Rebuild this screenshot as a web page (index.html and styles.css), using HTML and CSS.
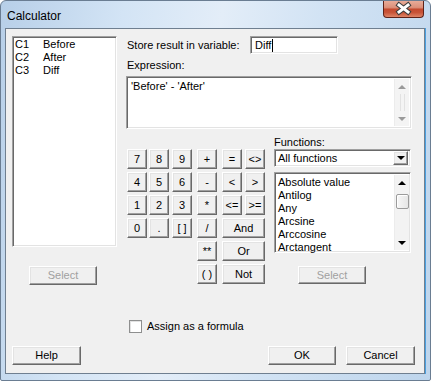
FILE: index.html
```html
<!DOCTYPE html>
<html>
<head>
<meta charset="utf-8">
<link rel="stylesheet" href="styles.css">
</head>
<body>
<div class="window">
  <div class="titlebar">
    <span class="title">Calculator</span>
    <div class="close">
      <svg width="39" height="16" viewBox="0 0 39 16">
        <g stroke-linecap="square">
          <line x1="15" y1="4" x2="24" y2="11" stroke="#3d3d3d" stroke-width="5"/>
          <line x1="24" y1="4" x2="15" y2="11" stroke="#3d3d3d" stroke-width="5"/>
          <line x1="15" y1="4" x2="24" y2="11" stroke="#ffffff" stroke-width="3"/>
          <line x1="24" y1="4" x2="15" y2="11" stroke="#ffffff" stroke-width="3"/>
        </g>
      </svg>
    </div>
  </div>
  <div class="client">
    <div class="top">
      <div class="leftcol">
        <div class="sunken varlist">
          <div class="item"><span class="cn">C1</span>Before</div>
          <div class="item"><span class="cn">C2</span>After</div>
          <div class="item"><span class="cn">C3</span>Diff</div>
        </div>
        <div class="btn disabled sel-left">Select</div>
      </div>
      <div class="rightcol">
        <div class="storerow">
          <span class="store-label">Store result in variable:</span>
          <div class="sunken input">Diff<span class="caret"></span></div>
        </div>
        <div class="label expr-label">Expression:</div>
        <div class="sunken expr">
          <div class="expr-text">'Before' - 'After'</div>
          <div class="vscroll off">
            <div class="sarrow"><span class="tri-up grey"></span></div>
            <div class="strack"><span class="tline"></span></div>
            <div class="sarrow"><span class="tri-down grey"></span></div>
          </div>
        </div>
        <div class="lower">
          <div class="keypad">
            <div class="btn k">7</div><div class="btn k">8</div><div class="btn k">9</div>
            <div class="btn k">+</div><div class="btn k">=</div><div class="btn k">&lt;&gt;</div>
            <div class="btn k">4</div><div class="btn k">5</div><div class="btn k">6</div>
            <div class="btn k">-</div><div class="btn k">&lt;</div><div class="btn k">&gt;</div>
            <div class="btn k">1</div><div class="btn k">2</div><div class="btn k">3</div>
            <div class="btn k">*</div><div class="btn k">&lt;=</div><div class="btn k">&gt;=</div>
            <div class="btn k">0</div><div class="btn k">.</div><div class="btn k">[ ]</div>
            <div class="btn k">/</div><div class="btn k wide">And</div>
            <div class="btn k c4">**</div><div class="btn k wide">Or</div>
            <div class="btn k c4">( )</div><div class="btn k wide">Not</div>
          </div>
          <div class="funcs">
            <div class="label flabel">Functions:</div>
            <div class="sunken combo">
              <span class="combo-text">All functions</span>
              <div class="btn dd"><span class="tri-down black"></span></div>
            </div>
            <div class="sunken flist">
              <div class="fitems">
                <div class="fitem">Absolute value</div>
                <div class="fitem">Antilog</div>
                <div class="fitem">Any</div>
                <div class="fitem">Arcsine</div>
                <div class="fitem">Arccosine</div>
                <div class="fitem">Arctangent</div>
              </div>
              <div class="vscroll">
                <div class="sarrow"><span class="tri-up black"></span></div>
                <div class="strack"><div class="thumb"></div></div>
                <div class="sarrow"><span class="tri-down black"></span></div>
              </div>
            </div>
            <div class="btn disabled sel-right">Select</div>
          </div>
        </div>
      </div>
    </div>
    <div class="checkrow">
      <span class="checkbox"></span>
      <span class="checklabel">Assign as a formula</span>
    </div>
    <div class="buttonrow">
      <div class="btn help">Help</div>
      <div class="btn ok">OK</div>
      <div class="btn cancel">Cancel</div>
    </div>
  </div>
</div>
</body>
</html>
```

FILE: styles.css
```css
html, body {
  margin: 0;
  padding: 0;
  background: #ffffff;
  overflow: hidden;
}

.window {
  width: 431px;
  height: 381px;
  box-sizing: border-box;
  border: 1px solid #6a7d92;
  border-radius: 6px 6px 2px 2px;
  background: linear-gradient(100deg, #b7cfe8 0%, #d3e4f5 25%, #e3edf8 45%, #d2e3f4 65%, #bed5ec 100%);
  font-family: "Liberation Sans", Arial, sans-serif;
  font-size: 11px;
  color: #000;
  position: relative;
}

.titlebar {
  height: 27px;
  display: flex;
  justify-content: space-between;
  align-items: flex-start;
}

.title {
  font-size: 12px;
  line-height: 16px;
  padding: 7px 0 0 6px;
  color: #000;
}

.close {
  width: 39px;
  height: 16px;
  margin-right: 6px;
  border: 1px solid #5e2218;
  border-top: none;
  border-radius: 0 0 4px 4px;
  background: linear-gradient(to bottom, #e8ab98 0%, #dc917b 40%, #c44a2f 52%, #c85438 72%, #df8467 100%);
}

.close svg {
  display: block;
}

.client {
  margin-left: 4px;
  width: 420px;
  height: 346px;
  box-sizing: border-box;
  border: 1px solid #6f7f90;
  background: #f0f0f0;
  padding: 7px 9px 0 6px;
  display: flex;
  flex-direction: column;
  box-shadow: 1px 0 0 #4aa0e0;
}

.top {
  display: flex;
  align-items: flex-start;
}

.sunken {
  box-sizing: border-box;
  background: #ffffff;
  border: 1px solid;
  border-color: #a0a0a0 #ffffff #ffffff #a0a0a0;
  box-shadow: inset 1px 1px 0 #696969, inset -1px -1px 0 #e3e3e3;
}

.btn {
  box-sizing: border-box;
  background: #f0f0f0;
  border: 1px solid;
  border-color: #ffffff #696969 #696969 #ffffff;
  box-shadow: inset -1px -1px 0 #a0a0a0, inset 1px 1px 0 #e3e3e3;
  display: flex;
  align-items: center;
  justify-content: center;
  line-height: 13px;
}

.btn.disabled {
  color: #a0a0a0;
}

.leftcol {
  width: 105px;
  display: flex;
  flex-direction: column;
}

.varlist {
  width: 105px;
  height: 211px;
  padding: 1px 0 0 2px;
}

.item {
  line-height: 13px;
  display: flex;
}

.cn {
  width: 28px;
}

.sel-left {
  margin: 19px 0 0 17px;
  width: 68px;
  height: 19px;
}

.rightcol {
  margin-left: 9px;
  width: 286px;
}

.storerow {
  display: flex;
  align-items: center;
  height: 18px;
}

.store-label {
  width: 123px;
  padding-left: 1px;
  line-height: 13px;
}

.input {
  width: 88px;
  height: 18px;
  padding: 0 0 0 4px;
  line-height: 16px;
  display: flex;
  align-items: center;
}

.caret {
  display: inline-block;
  width: 1px;
  height: 13px;
  background: #000;
  margin-left: 1px;
}

.label {
  line-height: 13px;
}

.expr-label {
  margin-top: 5px;
  padding-left: 1px;
}

.expr {
  margin-top: 4px;
  width: 286px;
  height: 53px;
  display: flex;
  padding: 2px;
}

.expr-text {
  flex: 1;
  line-height: 13px;
  padding: 1px 0 0 2px;
}

.vscroll {
  width: 15px;
  display: flex;
  flex-direction: column;
  background: #f4f4f4;
  border-left: 1px solid #ececec;
  box-sizing: border-box;
}

.sarrow {
  height: 15px;
  display: flex;
  align-items: center;
  justify-content: center;
  flex: none;
}

.strack {
  flex: 1;
  display: flex;
  justify-content: center;
}

.tline {
  width: 3px;
  border-left: 1px solid #e2e2e2;
  border-right: 1px solid #e2e2e2;
  margin: 0 0;
}

.tri-up, .tri-down {
  width: 0;
  height: 0;
  border-left: 4px solid transparent;
  border-right: 4px solid transparent;
}

.tri-up {
  border-bottom: 4px solid #000;
}

.tri-down {
  border-top: 4px solid #000;
}

.tri-up.grey {
  border-bottom-color: #9a9a9a;
}

.tri-down.grey {
  border-top-color: #9a9a9a;
}

.lower {
  margin-top: 7px;
  display: flex;
  align-items: flex-start;
}

.keypad {
  margin-left: 1px;
  padding-top: 13px;
  display: grid;
  grid-template-columns: 22px 23px 25px 25px 23px 20px;
  grid-auto-rows: 23px;
}

.keypad .k {
  width: 20px;
  height: 20px;
  font-size: 11px;
}

.keypad .wide {
  grid-column: 5 / span 2;
  width: 43px;
}

.keypad .c4 {
  grid-column: 4;
}

.funcs {
  margin-left: 9px;
  width: 137px;
  display: flex;
  flex-direction: column;
}

.flabel {
  padding-left: 0;
}

.combo {
  height: 18px;
  width: 137px;
  display: flex;
  align-items: center;
  padding: 2px;
}

.combo-text {
  flex: 1;
  padding-left: 1px;
  line-height: 13px;
}

.btn.dd {
  width: 15px;
  height: 14px;
}

.tri-down.black {
  border-top-color: #000;
}

.flist {
  margin-top: 5px;
  width: 137px;
  height: 81px;
  display: flex;
  padding: 2px 1px 2px 2px;
}

.fitems {
  flex: 1;
  padding: 1px 0 0 1px;
}

.fitem {
  line-height: 13px;
  white-space: nowrap;
}

.flist .vscroll {
  background: #f3f3f3;
}

.thumb {
  margin-top: 4px;
  width: 13px;
  height: 15px;
  box-sizing: border-box;
  border: 1px solid #9b9b9b;
  border-radius: 2px;
  background: linear-gradient(to right, #f7f7f7, #e6e6e6);
  box-shadow: inset 1px 1px 0 #ffffff;
}

.sel-right {
  margin: 13px 0 0 24px;
  width: 68px;
  height: 18px;
}

.checkrow {
  margin-top: 33px;
  padding-left: 117px;
  display: flex;
  align-items: center;
  height: 13px;
}

.checkbox {
  width: 13px;
  height: 13px;
  box-sizing: border-box;
  border: 1px solid #8e8f8f;
  background: #ffffff;
  box-shadow: inset 1px 1px 0 #e2e2e2;
}

.checklabel {
  margin-left: 5px;
  line-height: 13px;
}

.buttonrow {
  margin-top: 13px;
  display: flex;
}

.help {
  width: 69px;
  height: 19px;
}

.ok {
  margin-left: auto;
  width: 68px;
  height: 19px;
}

.cancel {
  margin-left: 10px;
  width: 69px;
  height: 19px;
}
```
